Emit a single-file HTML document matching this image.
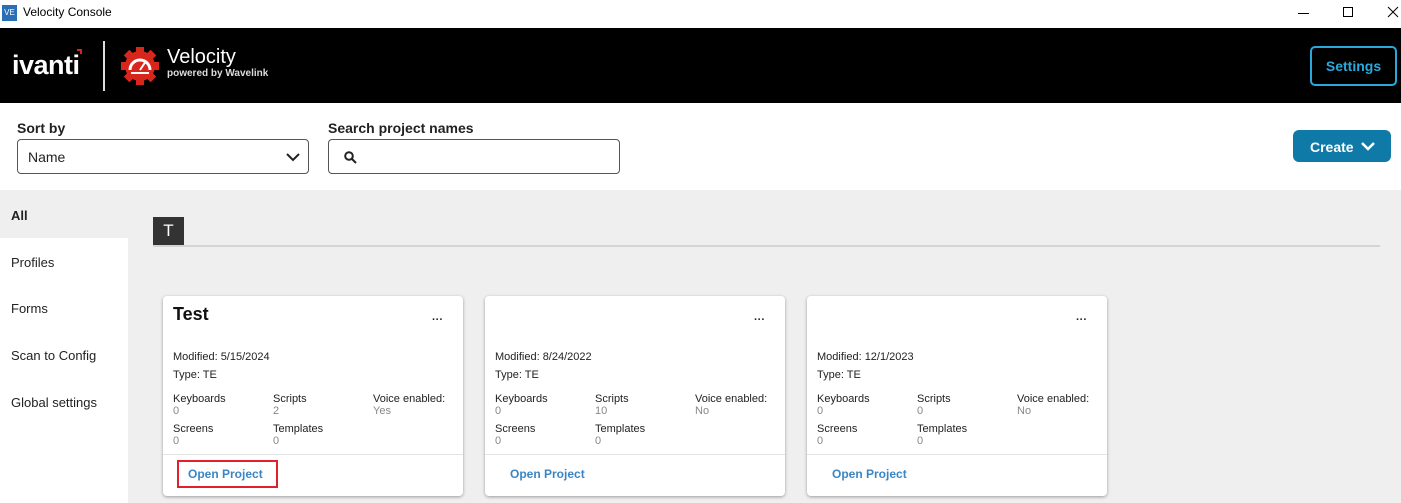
<!DOCTYPE html><html><head><style>
*{margin:0;padding:0;box-sizing:border-box}
body{width:1401px;height:503px;overflow:hidden;background:#efefef;font-family:"Liberation Sans",sans-serif;position:relative}
.a{position:absolute}
.card{position:absolute;top:296px;width:300px;height:200px;background:#fff;border-radius:4px;box-shadow:0 1px 3px rgba(0,0,0,.35);font-size:11px;color:#222}
.card .g{color:#888}
.card div{position:absolute}
</style></head><body>
<div class="a" style="left:0;top:0;width:1401px;height:28px;background:#fff"></div>
<div class="a" style="left:2px;top:5px;width:15px;height:16px;background:#2a6fb5;color:#fff;font-size:8px;line-height:16px;text-align:center">VE</div>
<div class="a" style="left:23px;top:5px;font-size:12px;color:#000">Velocity Console</div>
<div class="a" style="left:1298px;top:13px;width:11px;height:1px;background:#000"></div>
<div class="a" style="left:1343px;top:7px;width:10px;height:10px;border:1px solid #000"></div>
<svg class="a" style="left:1387px;top:6px" width="12" height="12"><path d="M1 1l10 10M11 1L1 11" stroke="#000" stroke-width="1"/></svg>
<div class="a" style="left:0;top:28px;width:1401px;height:75px;background:#000"></div>
<div class="a" style="left:12px;top:50px;color:#fff;font-size:27px;font-weight:bold;letter-spacing:-0.5px">ivanti</div>
<div class="a" style="left:77px;top:49px;width:5px;height:5px;border-top:2px solid #d22;border-right:2px solid #d22"></div>
<div class="a" style="left:103px;top:41px;width:2px;height:50px;background:#ddd"></div>
<svg class="a" style="left:120px;top:46px" width="40" height="40" viewBox="0 0 40 40">
<g fill="#d9261c"><circle cx="20" cy="20" r="15"/>
<rect x="16" y="1" width="8" height="8"/><rect x="16" y="31" width="8" height="8"/><rect x="1" y="16" width="8" height="8"/><rect x="31" y="16" width="8" height="8"/>
<rect x="16" y="1" width="8" height="8" transform="rotate(45 20 20)"/><rect x="16" y="31" width="8" height="8" transform="rotate(45 20 20)"/><rect x="1" y="16" width="8" height="8" transform="rotate(45 20 20)"/><rect x="31" y="16" width="8" height="8" transform="rotate(45 20 20)"/></g>
<path d="M10 24a10 10 0 0 1 20 0" stroke="#fff" stroke-width="3" fill="none"/><path d="M20 24l6-9" stroke="#fff" stroke-width="2"/><rect x="11" y="26" width="18" height="2" fill="#fff"/></svg>
<div class="a" style="left:167px;top:46px;color:#fff;font-size:20px">Velocity</div>
<div class="a" style="left:167px;top:68px;color:#ddd;font-size:10px;font-weight:bold">powered by Wavelink</div>
<div class="a" style="left:1310px;top:46px;width:87px;height:40px;border:2px solid #2aa8dc;border-radius:5px;color:#2aa8dc;font-size:14px;font-weight:bold;text-align:center;line-height:36px">Settings</div>
<div class="a" style="left:0;top:103px;width:1401px;height:87px;background:#fff"></div>
<div class="a" style="left:17px;top:120px;font-size:14px;font-weight:bold;color:#222">Sort by</div>
<div class="a" style="left:17px;top:139px;width:292px;height:35px;border:1px solid #555;border-radius:4px;font-size:14px;color:#222;padding:9px 10px">Name
<svg style="position:absolute;right:8px;top:12px" width="14" height="10"><path d="M1 2l6 6 6-6" stroke="#222" stroke-width="2" fill="none"/></svg></div>
<div class="a" style="left:328px;top:120px;font-size:14px;font-weight:bold;color:#222">Search project names</div>
<div class="a" style="left:328px;top:139px;width:292px;height:35px;border:1px solid #555;border-radius:4px">
<svg style="position:absolute;left:15px;top:11px" width="13" height="13"><circle cx="5" cy="5" r="3.8" stroke="#222" stroke-width="2" fill="none"/><path d="M8 8l4 4" stroke="#222" stroke-width="2"/></svg></div>
<div class="a" style="left:1293px;top:130px;width:98px;height:32px;background:#0f7aa8;border-radius:6px;color:#fff;font-size:14px;font-weight:bold;line-height:34px;padding-left:17px">Create
<svg style="position:absolute;right:16px;top:12px" width="14" height="9"><path d="M1 1l6 6 6-6" stroke="#fff" stroke-width="2.5" fill="none"/></svg></div>
<div class="a" style="left:0;top:238px;width:128px;height:265px;background:#fff"></div>
<div class="a" style="left:11px;top:208px;font-size:13px;font-weight:bold;color:#222">All</div>
<div class="a" style="left:11px;top:255px;font-size:13px;color:#222">Profiles</div>
<div class="a" style="left:11px;top:301px;font-size:13px;color:#222">Forms</div>
<div class="a" style="left:11px;top:348px;font-size:13px;color:#222">Scan to Config</div>
<div class="a" style="left:11px;top:395px;font-size:13px;color:#222">Global settings</div>
<div class="a" style="left:153px;top:217px;width:31px;height:28px;background:#333;color:#fff;font-size:17px;text-align:center;line-height:28px">T</div>
<div class="a" style="left:153px;top:245px;width:1227px;height:2px;background:#d4d4d4"></div>

<div class="card" style="left:163px">
<div style="left:10px;top:8px;font-size:18px;font-weight:bold;color:#111">Test</div>
<div style="left:269px;top:18px;font-size:11px;font-weight:bold">···</div>
<div style="left:10px;top:55px">Modified: 5/15/2024</div><div style="left:10px;top:73px">Type: TE</div>
<div style="left:10px;top:97px">Keyboards<br><span class="g">0</span></div><div style="left:110px;top:97px">Scripts<br><span class="g">2</span></div><div style="left:210px;top:97px">Voice enabled:<br><span class="g">Yes</span></div>
<div style="left:10px;top:127px">Screens<br><span class="g">0</span></div><div style="left:110px;top:127px">Templates<br><span class="g">0</span></div>
<div style="left:0;top:158px;width:300px;height:1px;background:#e4e4e4"></div>
<div style="left:14px;top:164px;width:101px;height:28px;border:2px solid #e0202a"></div>
<div style="left:25px;top:171px;font-size:12px;font-weight:bold;color:#3a86c4">Open Project</div>
</div>
<div class="card" style="left:485px">
<div style="left:269px;top:18px;font-size:11px;font-weight:bold">···</div>
<div style="left:10px;top:55px">Modified: 8/24/2022</div><div style="left:10px;top:73px">Type: TE</div>
<div style="left:10px;top:97px">Keyboards<br><span class="g">0</span></div><div style="left:110px;top:97px">Scripts<br><span class="g">10</span></div><div style="left:210px;top:97px">Voice enabled:<br><span class="g">No</span></div>
<div style="left:10px;top:127px">Screens<br><span class="g">0</span></div><div style="left:110px;top:127px">Templates<br><span class="g">0</span></div>
<div style="left:0;top:158px;width:300px;height:1px;background:#e4e4e4"></div>
<div style="left:25px;top:171px;font-size:12px;font-weight:bold;color:#3a86c4">Open Project</div>
</div>
<div class="card" style="left:807px">
<div style="left:269px;top:18px;font-size:11px;font-weight:bold">···</div>
<div style="left:10px;top:55px">Modified: 12/1/2023</div><div style="left:10px;top:73px">Type: TE</div>
<div style="left:10px;top:97px">Keyboards<br><span class="g">0</span></div><div style="left:110px;top:97px">Scripts<br><span class="g">0</span></div><div style="left:210px;top:97px">Voice enabled:<br><span class="g">No</span></div>
<div style="left:10px;top:127px">Screens<br><span class="g">0</span></div><div style="left:110px;top:127px">Templates<br><span class="g">0</span></div>
<div style="left:0;top:158px;width:300px;height:1px;background:#e4e4e4"></div>
<div style="left:25px;top:171px;font-size:12px;font-weight:bold;color:#3a86c4">Open Project</div>
</div>
</body></html>
